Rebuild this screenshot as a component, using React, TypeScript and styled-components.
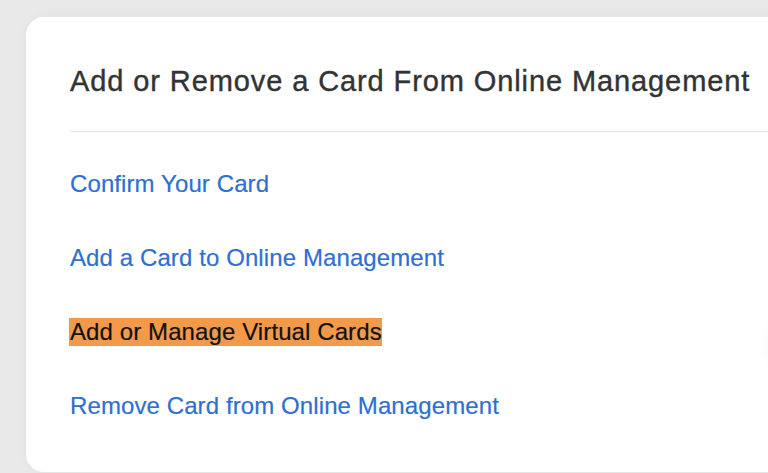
import styled, { createGlobalStyle } from "styled-components";

const GlobalStyle = createGlobalStyle`
  html, body {
    margin: 0;
    padding: 0;
    background: #e9e9ea;
    overflow: hidden;
  }
  body {
    font-family: "Liberation Sans", Arial, sans-serif;
  }
`;

const links = [
  { label: "Confirm Your Card" },
  { label: "Add a Card to Online Management" },
  { label: "Add or Manage Virtual Cards", highlighted: true },
  { label: "Remove Card from Online Management" },
];

const App = () => {
  return (
    <>
      <GlobalStyle />
      <Page>
        <Card>
          <Title>Add or Remove a Card From Online Management</Title>
          <Divider />
          <LinkList>
            {links.map((link) => (
              <LinkItem key={link.label}>
                <LinkText href="#" $highlighted={link.highlighted}>
                  {link.label}
                </LinkText>
              </LinkItem>
            ))}
          </LinkList>
        </Card>
        <FloatingShadow />
      </Page>
    </>
  );
};

export default App;

const Page = styled.div`
  position: relative;
  width: 768px;
  height: 473px;
  padding: 17px 0 0 26px;
  box-sizing: border-box;
  overflow: hidden;
`;

const Card = styled.div`
  width: 800px;
  height: 455px;
  background: #ffffff;
  border-radius: 18px;
  box-shadow: 0 0 14px rgba(0, 0, 0, 0.04);
  padding: 46px 0 0 44px;
  box-sizing: border-box;
  display: flex;
  flex-direction: column;
`;

const Title = styled.h1`
  margin: 0;
  font-family: "Liberation Sans", Arial, sans-serif;
  font-size: 29px;
  line-height: 36px;
  font-weight: 400;
  letter-spacing: 0.9px;
  color: #333333;
  white-space: nowrap;
  -webkit-text-stroke: 0.4px #333333;
`;

const Divider = styled.div`
  height: 1px;
  background: #e4e4e5;
  margin-top: 32px;
`;

const LinkList = styled.ul`
  list-style: none;
  margin: 38px 0 0;
  padding: 0;
  display: flex;
  flex-direction: column;
  gap: 46px;
`;

const LinkItem = styled.li`
  height: 28px;
  display: flex;
  align-items: center;
`;

const LinkText = styled.a<{ $highlighted?: boolean }>`
  font-family: "Liberation Sans", Arial, sans-serif;
  font-size: 24px;
  line-height: 28px;
  letter-spacing: 0.1px;
  text-decoration: none;
  color: ${(p) => (p.$highlighted ? "#111111" : "#2f6fcf")};
  background: ${(p) => (p.$highlighted ? "#f29a4a" : "transparent")};
  margin-left: ${(p) => (p.$highlighted ? "-1px" : "0")};
  padding-left: ${(p) => (p.$highlighted ? "1px" : "0")};
  white-space: nowrap;
  -webkit-text-stroke: 0.2px currentColor;
`;

const FloatingShadow = styled.div`
  position: absolute;
  left: 772px;
  top: 310px;
  width: 70px;
  height: 70px;
  border-radius: 50%;
  background: #ffffff;
  box-shadow: 0 0 14px rgba(0, 0, 0, 0.1);
`;
